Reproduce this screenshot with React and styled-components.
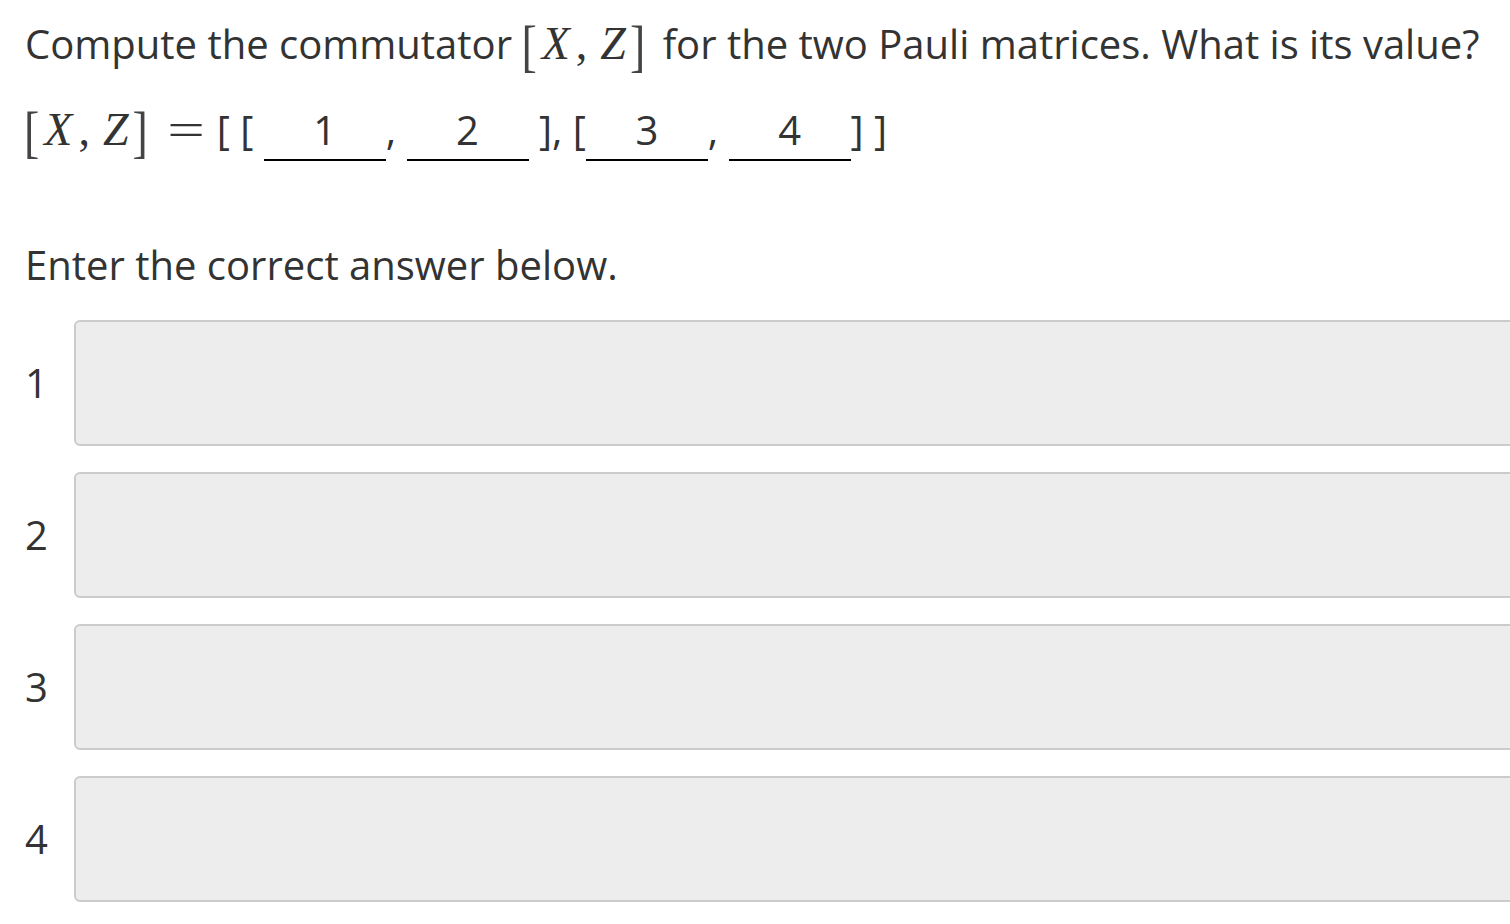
import React from "react";
import styled, { createGlobalStyle } from "styled-components";

const Global = createGlobalStyle`
  html, body { margin: 0; padding: 0; background: #fff; }
  body { overflow: hidden; font-family: "Open Sans", "Liberation Sans", sans-serif; color: #333; }
`;

const Page = styled.div`
  padding: 14px 0 0 25px;
  font-size: 40px;
  line-height: 60px;
  overflow: hidden;
`;

const Prompt = styled.p`
  margin: 0;
  white-space: nowrap;
`;

const Math = styled.span`
  display: inline-block;
  font-family: "Liberation Serif", "Times New Roman", serif;
  font-size: 46px;
  line-height: 60px;
  color: #333;
  margin-right: ${(p) => p.$trail || 0}px;
`;

const Bracket = styled.span`
  display: inline-block;
  font-style: normal;
  margin: 0 -1px;
  transform: scaleY(1.22) translateY(2px);
  color: #444;
`;

const Var = styled.span`
  display: inline-block;
  font-style: italic;
  padding: 0 ${(p) => p.$pad || 3}px;
`;

const Comma = styled.span`
  display: inline-block;
  margin-right: 8px;
`;

const Equals = styled.span`
  display: inline-block;
  margin: 0 18px 0 26px;
  transform: scaleX(1.45);
`;

const Equation = styled.div`
  margin-top: 26px;
  height: 60px;
  white-space: pre;
`;

const Blank = styled.span`
  display: inline-block;
  width: 122px;
  text-align: center;
  border-bottom: 2px solid #000;
  line-height: 58px;
  vertical-align: baseline;
`;

const Instruction = styled.p`
  margin: 75px 0 0;
`;

const Answers = styled.div`
  margin-top: 25px;
  margin-right: -40px;
  display: flex;
  flex-direction: column;
  gap: 26px;
`;

const Row = styled.div`
  display: flex;
  align-items: center;
`;

const Label = styled.span`
  width: 49px;
  flex: none;
`;

const Field = styled.div`
  flex: 1;
  height: 122px;
  background: #ededed;
  border: 2px solid #cbcbcb;
  border-radius: 6px;
`;

function Commutator({ trail }) {
  return (
    <Math $trail={trail}>
      <Bracket>[</Bracket>
      <Var $pad={6}>X</Var>
      <Comma>,</Comma>
      <Var $pad={5}>Z</Var>
      <Bracket>]</Bracket>
    </Math>
  );
}

export default function App() {
  return (
    <>
      <Global />
      <Page>
        <Prompt>
          Compute the commutator <Commutator trail={8} /> for the two Pauli matrices. What is its value?
        </Prompt>
        <Equation>
          <Commutator />
          <Math>
            <Equals>=</Equals>
          </Math>
          {"[ [ "}
          <Blank>1</Blank>
          {", "}
          <Blank>2</Blank>
          {" ], ["}
          <Blank>3</Blank>
          {", "}
          <Blank>4</Blank>
          {"] ]"}
        </Equation>
        <Instruction>Enter the correct answer below.</Instruction>
        <Answers>
          {[1, 2, 3, 4].map((n) => (
            <Row key={n}>
              <Label>{n}</Label>
              <Field />
            </Row>
          ))}
        </Answers>
      </Page>
    </>
  );
}
